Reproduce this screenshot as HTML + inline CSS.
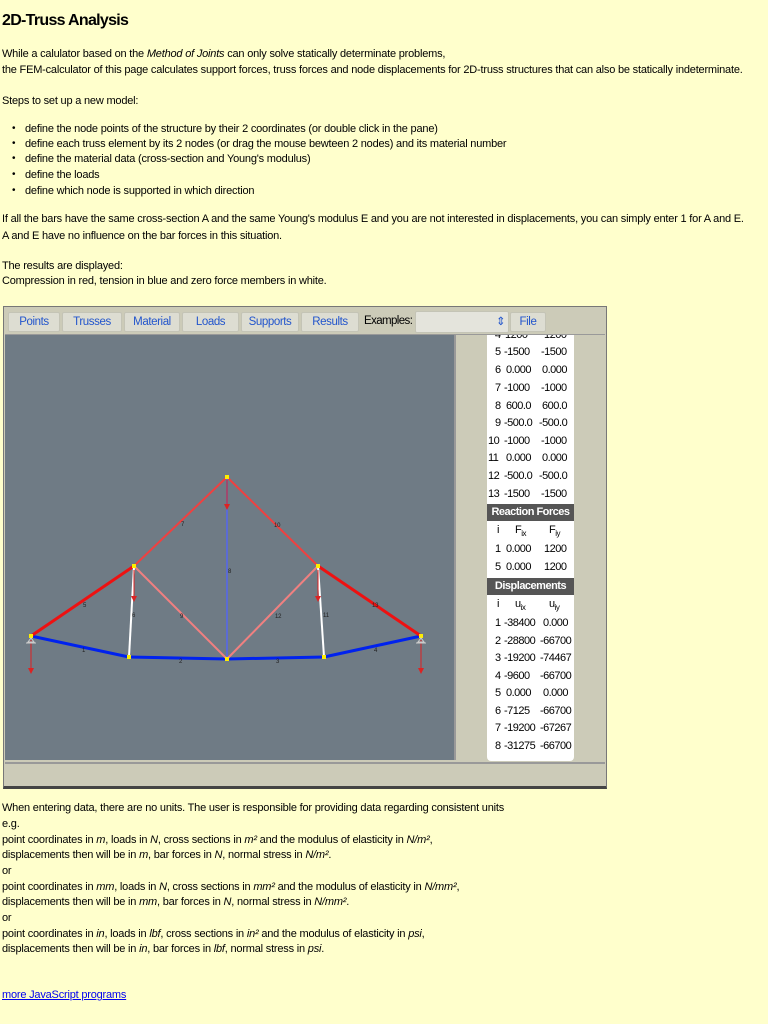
<!DOCTYPE html>
<html><head><meta charset="utf-8"><style>
body{margin:0;background:#ffffcc;font-family:"Liberation Sans",Arial,sans-serif;font-size:11px;color:#000;letter-spacing:-0.2px;width:768px;height:1024px;position:relative;overflow:hidden}
.t{position:absolute;left:2px;white-space:nowrap;line-height:14px}
h1{position:absolute;left:2px;top:12px;margin:0;font-size:16px;letter-spacing:-0.7px}
.li{left:25px}
.li:before{content:"•";position:absolute;left:-13px;font-size:10px}
#box{position:absolute;left:3px;top:306px;width:602px;height:479px;background:#cccbb8;border:1px solid #777;border-bottom:3px solid #444}
#tb{position:absolute;left:1px;top:1px;right:1px;height:26px;border-bottom:1px solid #999}
.b{position:absolute;top:4px;height:18px;background:#ddddd2;border:1px solid #c4c4b6;border-radius:2px;color:#2255cc;font-size:11.5px;text-align:center;line-height:18px;letter-spacing:-0.4px}
#cv{position:absolute;left:1px;top:28px;width:449px;height:425px;background:#6f7b85;border-right:2px solid #999}
#tab{position:absolute;left:483px;top:28px;width:87px;height:426px;background:#fff;border-radius:0 0 4px 4px;overflow:hidden;font-size:11px;letter-spacing:-0.5px}
.r{position:absolute;left:0;width:87px;height:17px;line-height:17px;white-space:nowrap}
.r span{position:absolute}
.h{background:#555;color:#fff;font-weight:bold;text-align:center;font-size:11px}
a{color:#0000ee}
</style></head><body>
<h1>2D-Truss Analysis</h1>
<div class="t" style="top:47px">While a calulator based on the <i>Method of Joints</i> can only solve statically determinate problems,</div>
<div class="t" style="top:63px">the FEM-calculator of this page calculates support forces, truss forces and node displacements for 2D-truss structures that can also be statically indeterminate.</div>
<div class="t" style="top:94px">Steps to set up a new model:</div>
<div class="t li" style="top:122px">define the node points of the structure by their 2 coordinates (or double click in the pane)</div>
<div class="t li" style="top:137px">define each truss element by its 2 nodes (or drag the mouse bewteen 2 nodes) and its material number</div>
<div class="t li" style="top:152px">define the material data (cross-section and Young's modulus)</div>
<div class="t li" style="top:168px">define the loads</div>
<div class="t li" style="top:184px">define which node is supported in which direction</div>
<div class="t" style="top:212px">If all the bars have the same cross-section A and the same Young's modulus E and you are not interested in displacements, you can simply enter 1 for A and E.</div>
<div class="t" style="top:229px">A and E have no influence on the bar forces in this situation.</div>
<div class="t" style="top:259px">The results are displayed:</div>
<div class="t" style="top:274px">Compression in red, tension in blue and zero force members in white.</div>

<div id="box">
<div id="tb">
<div class="b" style="left:3px;width:50px">Points</div>
<div class="b" style="left:57px;width:58px">Trusses</div>
<div class="b" style="left:119px;width:54px">Material</div>
<div class="b" style="left:177px;width:55px">Loads</div>
<div class="b" style="left:236px;width:56px">Supports</div>
<div class="b" style="left:296px;width:56px">Results</div>
<div style="position:absolute;left:359px;top:7px;font-size:11.5px;letter-spacing:-0.6px">Examples:</div>
<div class="b" style="left:410px;top:3px;width:92px;height:20px;background:#e4e4dc;color:#2255cc;text-align:right;line-height:20px">&#8661;&nbsp;</div>
<div class="b" style="left:505px;width:34px">File</div>
</div>
<div id="cv">
<svg width="449" height="425" viewBox="5 335 449 425" style="position:absolute;left:0;top:0">
<g fill="none">
<line x1="31" y1="636" x2="129" y2="657" stroke="#0022ee" stroke-width="3"/>
<line x1="129" y1="657" x2="227" y2="659" stroke="#0022ee" stroke-width="3"/>
<line x1="227" y1="659" x2="324" y2="657" stroke="#0022ee" stroke-width="3"/>
<line x1="324" y1="657" x2="421" y2="636" stroke="#0022ee" stroke-width="3"/>
<line x1="31" y1="636" x2="134" y2="566" stroke="#ee1111" stroke-width="3"/>
<line x1="318" y1="566" x2="421" y2="636" stroke="#ee1111" stroke-width="3"/>
<line x1="134" y1="566" x2="227" y2="477" stroke="#f04040" stroke-width="2"/>
<line x1="227" y1="477" x2="318" y2="566" stroke="#f04040" stroke-width="2"/>
<line x1="134" y1="566" x2="227" y2="659" stroke="#f08080" stroke-width="2"/>
<line x1="318" y1="566" x2="227" y2="659" stroke="#f08080" stroke-width="2"/>
<line x1="227" y1="477" x2="227" y2="659" stroke="#5566ee" stroke-width="1.5"/>
<line x1="134" y1="566" x2="129" y2="657" stroke="#fff" stroke-width="2"/>
<line x1="318" y1="566" x2="324" y2="657" stroke="#fff" stroke-width="2"/>
<g stroke="#dd2222" stroke-width="1"><line x1="31" y1="640" x2="31" y2="672"/><line x1="421" y1="640" x2="421" y2="672"/><line x1="227" y1="480" x2="227" y2="508"/><line x1="134" y1="570" x2="134" y2="600"/><line x1="318" y1="570" x2="318" y2="600"/></g>
</g>
<g fill="#dd2222"><path d="M28 668h6l-3 6z"/><path d="M418 668h6l-3 6z"/><path d="M224 504h6l-3 6z"/><path d="M131 596h6l-3 6z"/><path d="M315 596h6l-3 6z"/></g>
<g fill="#ffee00"><rect x="29" y="634" width="4" height="4"/><rect x="127" y="655" width="4" height="4"/><rect x="225" y="657" width="4" height="4"/><rect x="322" y="655" width="4" height="4"/><rect x="419" y="634" width="4" height="4"/><rect x="132" y="564" width="4" height="4"/><rect x="225" y="475" width="4" height="4"/><rect x="316" y="564" width="4" height="4"/></g>
<g fill="#222" font-size="6" font-family="Liberation Sans"><text x="82" y="652">1</text><text x="179" y="663">2</text><text x="276" y="663">3</text><text x="374" y="652">4</text><text x="83" y="607">5</text><text x="132" y="617">6</text><text x="181" y="526">7</text><text x="228" y="573">8</text><text x="180" y="618">9</text><text x="274" y="527">10</text><text x="323" y="617">11</text><text x="275" y="618">12</text><text x="372" y="607">13</text></g>
<g stroke="#ccc" fill="none"><path d="M28 642l3-4 3 4zM26 643h10"/><path d="M418 642l3-4 3 4zM416 643h10"/></g>
</svg>
</div>
<div id="tab">
<div class="r" style="top:-8px"><span style="left:8px">4</span><span style="left:18px">1200</span><span style="left:57px">1200</span></div>
<div class="r" style="top:9px"><span style="left:8px">5</span><span style="left:17px">-1500</span><span style="left:54px">-1500</span></div>
<div class="r" style="top:27px"><span style="left:8px">6</span><span style="left:19px">0.000</span><span style="left:55px">0.000</span></div>
<div class="r" style="top:45px"><span style="left:8px">7</span><span style="left:17px">-1000</span><span style="left:54px">-1000</span></div>
<div class="r" style="top:63px"><span style="left:8px">8</span><span style="left:19px">600.0</span><span style="left:55px">600.0</span></div>
<div class="r" style="top:80px"><span style="left:8px">9</span><span style="left:17px">-500.0</span><span style="left:52px">-500.0</span></div>
<div class="r" style="top:98px"><span style="left:1px">10</span><span style="left:17px">-1000</span><span style="left:54px">-1000</span></div>
<div class="r" style="top:115px"><span style="left:1px">11</span><span style="left:19px">0.000</span><span style="left:55px">0.000</span></div>
<div class="r" style="top:133px"><span style="left:1px">12</span><span style="left:17px">-500.0</span><span style="left:52px">-500.0</span></div>
<div class="r" style="top:151px"><span style="left:1px">13</span><span style="left:17px">-1500</span><span style="left:54px">-1500</span></div>
<div class="r h" style="top:169px">Reaction Forces</div>
<div class="r" style="top:187px"><span style="left:10px">i</span><span style="left:28px">F<sub style="font-size:8px">ix</sub></span><span style="left:62px">F<sub style="font-size:8px">iy</sub></span></div>
<div class="r" style="top:206px"><span style="left:8px">1</span><span style="left:19px">0.000</span><span style="left:57px">1200</span></div>
<div class="r" style="top:224px"><span style="left:8px">5</span><span style="left:19px">0.000</span><span style="left:57px">1200</span></div>
<div class="r h" style="top:243px">Displacements</div>
<div class="r" style="top:261px"><span style="left:10px">i</span><span style="left:28px">u<sub style="font-size:8px">ix</sub></span><span style="left:62px">u<sub style="font-size:8px">iy</sub></span></div>
<div class="r" style="top:280px"><span style="left:8px">1</span><span style="left:17px">-38400</span><span style="left:56px">0.000</span></div>
<div class="r" style="top:298px"><span style="left:8px">2</span><span style="left:17px">-28800</span><span style="left:53px">-66700</span></div>
<div class="r" style="top:315px"><span style="left:8px">3</span><span style="left:17px">-19200</span><span style="left:53px">-74467</span></div>
<div class="r" style="top:333px"><span style="left:8px">4</span><span style="left:17px">-9600</span><span style="left:53px">-66700</span></div>
<div class="r" style="top:350px"><span style="left:8px">5</span><span style="left:19px">0.000</span><span style="left:56px">0.000</span></div>
<div class="r" style="top:368px"><span style="left:8px">6</span><span style="left:17px">-7125</span><span style="left:53px">-66700</span></div>
<div class="r" style="top:385px"><span style="left:8px">7</span><span style="left:17px">-19200</span><span style="left:53px">-67267</span></div>
<div class="r" style="top:403px"><span style="left:8px">8</span><span style="left:17px">-31275</span><span style="left:53px">-66700</span></div>
</div>
<div style="position:absolute;left:1px;right:1px;top:455px;height:2px;background:#999"></div>
</div>

<div class="t" style="top:801px">When entering data, there are no units. The user is responsible for providing data regarding consistent units</div>
<div class="t" style="top:817px">e.g.</div>
<div class="t" style="top:833px">point coordinates in <i>m</i>, loads in <i>N</i>, cross sections in <i>m²</i> and the modulus of elasticity in <i>N/m²</i>,</div>
<div class="t" style="top:848px">displacements then will be in <i>m</i>, bar forces in <i>N</i>, normal stress in <i>N/m²</i>.</div>
<div class="t" style="top:864px">or</div>
<div class="t" style="top:880px">point coordinates in <i>mm</i>, loads in <i>N</i>, cross sections in <i>mm²</i> and the modulus of elasticity in <i>N/mm²</i>,</div>
<div class="t" style="top:895px">displacements then will be in <i>mm</i>, bar forces in <i>N</i>, normal stress in <i>N/mm²</i>.</div>
<div class="t" style="top:911px">or</div>
<div class="t" style="top:927px">point coordinates in <i>in</i>, loads in <i>lbf</i>, cross sections in <i>in²</i> and the modulus of elasticity in <i>psi</i>,</div>
<div class="t" style="top:942px">displacements then will be in <i>in</i>, bar forces in <i>lbf</i>, normal stress in <i>psi</i>.</div>
<div class="t" style="top:988px"><a href="#">more JavaScript programs</a></div>
</body></html>
